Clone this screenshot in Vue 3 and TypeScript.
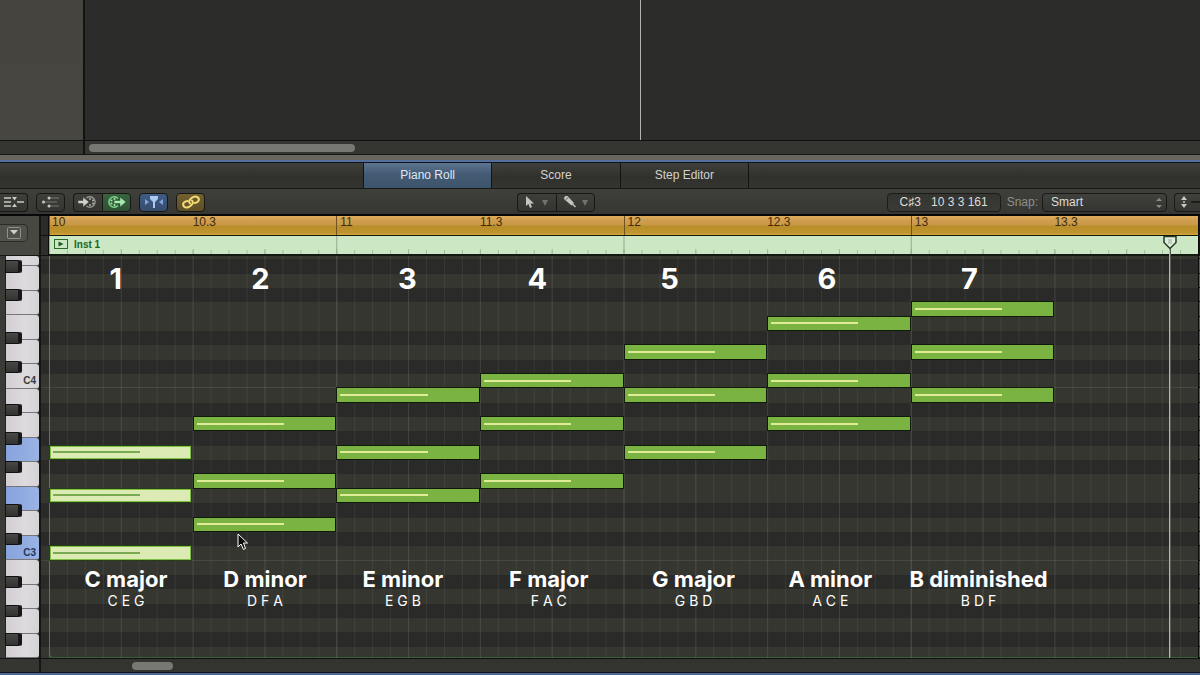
<script setup lang="ts">
import { ref } from 'vue'

interface Note { row: number; half: number; selected?: boolean }
interface Chord { name: string; tones: string; rows: number[]; numberAt: number; labelAt: number }

const chords: Chord[] = [
  { name: 'C major', tones: 'C E G', rows: [22, 18, 15], numberAt: 5.8, labelAt: 6.7 },
  { name: 'D minor', tones: 'D F A', rows: [20, 17, 13], numberAt: 18.4, labelAt: 18.8 },
  { name: 'E minor', tones: 'E G B', rows: [18, 15, 11], numberAt: 31.2, labelAt: 30.8 },
  { name: 'F major', tones: 'F A C', rows: [17, 13, 10], numberAt: 42.5, labelAt: 43.5 },
  { name: 'G major', tones: 'G B D', rows: [15, 11, 8], numberAt: 54, labelAt: 56.1 },
  { name: 'A minor', tones: 'A C E', rows: [13, 10, 6], numberAt: 67.7, labelAt: 68 },
  { name: 'B diminished', tones: 'B D F', rows: [11, 8, 5], numberAt: 80.1, labelAt: 80.9 },
]

const notes: Note[] = chords.flatMap((c, i) =>
  c.rows.map((row) => ({ row, half: i + 1, selected: i === 0 })),
)

// Lanes from A4 down to F2; row 10 is C4 and row 22 is C3.
const lanes = Array.from({ length: 29 }, (_, i) => {
  const pitch = (((10 - (i + 1)) % 12) + 12) % 12
  return { row: i + 1, black: [1, 3, 6, 8, 10].includes(pitch), c: pitch === 0 }
})
const blackLanes = lanes.filter((l) => l.black)

const whiteKeys = Array.from({ length: 17 }, (_, i) => ({
  id: i,
  label: i === 5 ? 'C4' : i === 12 ? 'C3' : '',
  lit: [8, 10, 12].includes(i),
}))

const marks = ['10', '10.3', '11', '11.3', '12', '12.3', '13', '13.3']
const tabs = ['Piano Roll', 'Score', 'Step Editor']
const activeTab = ref('Piano Roll')
const snap = ref('Smart')
</script>

<template>
  <main class="app">
    <section class="arrange">
      <div class="track-head"></div>
      <div class="track-area"><div class="arrange-playhead"></div></div>
      <div class="arrange-scroll-left"></div>
      <div class="arrange-scroll"><div class="thumb wide"></div></div>
    </section>
    <div class="divider"></div>

    <nav class="tabs">
      <div class="tab-set">
        <button v-for="t in tabs" :key="t" type="button" class="tab" :class="{ active: t === activeTab }" @click="activeTab = t">{{ t }}</button>
      </div>
    </nav>

    <div class="toolbar">
      <div class="left-tools">
        <button type="button" class="tool first" aria-label="Collapse mode">
          <svg width="20" height="12" viewBox="0 0 20 12" stroke="#c9c9c4" stroke-width="1.5" fill="none">
            <path d="M0 2h7M0 6h7M0 10h7M13 6h7" /><path d="M8 1h5l-2.500 3.500zM8 11h5l-2.500-3.500z" fill="#c9c9c4" stroke="none" />
          </svg>
        </button>
        <button type="button" class="tool" aria-label="Automation">
          <svg width="18" height="12" viewBox="0 0 18 12" stroke="#777773" fill="none">
            <path d="M7 2h10M3 6h12M7 10h10" /><g fill="#c9c9c4" stroke="none"><circle cx="7" cy="2" r="1.500" /><circle cx="1.500" cy="6" r="1.500" /><circle cx="7" cy="10" r="1.500" /></g>
          </svg>
        </button>
        <div class="pair">
          <button type="button" class="tool" aria-label="MIDI in">
            <svg width="20" height="14" viewBox="0 0 20 14">
              <path d="M8.500 3a5.200 5.200 0 1 1 0 8" fill="none" stroke="#92928d" stroke-width="1.600" />
              <g fill="#a5a5a0"><circle cx="12" cy="4" r="1.100" /><circle cx="15" cy="5.500" r="1.100" /><circle cx="15" cy="8.500" r="1.100" /><circle cx="12" cy="10" r="1.100" /></g>
              <path d="M0 5.500h5V2l6 5-6 5V8.500H0z" fill="#d0d0cb" stroke="#383834" stroke-width=".5" />
            </svg>
          </button>
          <button type="button" class="tool green" aria-label="MIDI out">
            <svg width="20" height="14" viewBox="0 0 20 14">
              <path d="M11 3.500a5.200 5.200 0 1 0 0 7" fill="none" stroke="#80d08c" stroke-width="1.600" />
              <g fill="#9be6a5"><circle cx="7.500" cy="4" r="1.100" /><circle cx="4.500" cy="5.500" r="1.100" /><circle cx="4.500" cy="8.500" r="1.100" /><circle cx="7.500" cy="10" r="1.100" /></g>
              <path d="M7 5.500h6V2l6 5-6 5V8.500H7z" fill="#a5eab0" stroke="#2c5033" stroke-width=".5" />
            </svg>
          </button>
        </div>
        <button type="button" class="tool blue" aria-label="Catch playhead">
          <svg width="20" height="14" viewBox="0 0 20 14">
            <path d="M6 1h8v3l-3 3v6H9V7L6 4z" fill="#a9c8f5" /><path d="M1 4l4 3-4 3zM19 4l-4 3 4 3z" fill="#7fa3da" />
          </svg>
        </button>
        <button type="button" class="tool yellow" aria-label="Link">
          <svg width="18" height="14" viewBox="0 0 18 14" fill="none" stroke="#f3dc76" stroke-width="2" stroke-linecap="round">
            <path d="M8 8.500C6.800 7 7.200 5.200 8.500 4L10 2.800c1.500-1.200 4-1.500 5.500-.600 1.800 1.200 1.800 3.200.300 4.500C14.800 7.800 13.500 8 12.500 8" />
            <path d="M10 5.500c1.200 1.500.800 3.300-.500 4.500L8 11.200c-1.500 1.200-4 1.500-5.500.600-1.800-1.200-1.800-3.200-.300-4.500C3.200 6.200 4.500 6 5.500 6" />
          </svg>
        </button>
      </div>
      <div class="pair">
        <button type="button" class="tool pick" aria-label="Pointer tool">
          <svg width="24" height="14" viewBox="0 0 24 14"><path d="M1 1v10l2.500-2 1.500 4 2-1-1.500-3.500H9z" fill="#c4c4bf" /><path d="M17 5h6l-3 6z" fill="#73736e" /></svg>
        </button>
        <button type="button" class="tool pick" aria-label="Pencil tool">
          <svg width="26" height="14" viewBox="0 0 26 14"><path d="M1 2.500L2.500 1h2l6.500 7-2.500 2.500L1 4z" fill="#c4c4bf" /><path d="M9.500 9l3 3" stroke="#c4c4bf" stroke-width="1.500" /><path d="M3 4.500l2-2" stroke="#454540" /><path d="M19 5h6l-3 6z" fill="#73736e" /></svg>
        </button>
      </div>
      <div class="right-tools">
        <output class="position"><span>C♯3</span><span>10 3 3 161</span></output>
        <label for="snap">Snap:</label>
        <div class="select-wrap">
          <select id="snap" v-model="snap"><option>Smart</option><option>Bar</option><option>Beat</option></select>
          <svg width="6" height="12" viewBox="0 0 6 12"><path d="M0 4l3-3 3 3zM0 8l3 3 3-3z" fill="#8b8b86" /></svg>
        </div>
        <div class="zoom-box">
          <svg width="19" height="12" viewBox="0 0 19 12"><path d="M0 4l3-4 3 4zM0 8l3 4 3-4z" fill="#c9c9c4" /><circle cx="3" cy="6" r="1" fill="#c9c9c4" /><path d="M10 6h9" stroke="#1d1d1b" stroke-width="2" /></svg>
        </div>
      </div>
    </div>

    <section class="editor">
      <div class="corner">
        <button type="button" class="corner-btn" aria-label="Inspector">
          <svg width="14" height="12" viewBox="0 0 14 12"><rect x=".5" y=".5" width="13" height="11" rx="1" fill="none" stroke="#92928d" /><path d="M3 3h8L7 7.500z" fill="#d0d0cb" /></svg>
        </button>
      </div>
      <div class="gutter gutter-top"></div>
      <header class="timeline">
        <div class="ruler">
          <div v-for="(m, i) in marks" :key="m" class="mark" :class="{ bar: i % 2 === 0 }">{{ m }}</div>
        </div>
        <div class="region">
          <svg width="14" height="10" viewBox="0 0 14 10"><rect x=".5" y=".5" width="13" height="9" fill="none" stroke="#2a6a27" /><path d="M4.500 2.500L9.500 5l-5 2.500z" fill="#1f5a1d" /></svg>
          <span>Inst 1</span>
        </div>
      </header>
      <div class="edge edge-top"></div>

      <div class="piano">
        <div class="whites">
          <div v-for="k in whiteKeys" :key="k.id" class="white" :class="{ lit: k.lit }">{{ k.label }}</div>
        </div>
        <div class="blacks rows">
          <div v-for="l in blackLanes" :key="l.row" class="black" :style="{ gridRow: l.row }"></div>
        </div>
      </div>
      <div class="lanes-bg rows">
        <div v-for="l in lanes" :key="l.row" class="lane" :class="{ dark: l.black, c: l.c }"></div>
      </div>
      <div class="roll">
        <div class="grid-lines"></div>
        <div class="notes rows">
          <div v-for="(n, i) in notes" :key="i" class="note" :class="{ selected: n.selected }" :style="{ gridRow: n.row, gridColumn: n.half }"><i></i></div>
        </div>
        <template v-for="(c, i) in chords" :key="c.name">
          <div class="number" :style="{ left: c.numberAt + '%' }">{{ i + 1 }}</div>
          <div class="caption" :style="{ left: c.labelAt + '%' }">
            <strong>{{ c.name }}</strong>
            <span>{{ c.tones }}</span>
          </div>
        </template>
        <div class="playhead">
          <svg width="14" height="14" viewBox="0 0 14 14"><path d="M1 .5h12v6L7 12.500 1 6.500z" fill="#dfeedd" stroke="#263a26" stroke-width="1.500" /><path d="M6 3v5M8 3v5" stroke="#9aa89a" /></svg>
        </div>
        <svg class="cursor" width="12" height="18" viewBox="0 0 12 18"><path d="M1 1v13l3-3 2.500 5.500 2-1L6.500 10H10.500z" fill="#0c0c0c" stroke="#fff" /></svg>
      </div>
      <div class="edge rows">
        <div v-for="l in lanes" :key="l.row" class="sliver" :class="{ red: l.c }"></div>
      </div>

      <div class="foot-left"></div>
      <div class="foot"><div class="thumb small"></div></div>
    </section>
    <div class="focus-line"></div>
  </main>
</template>

<style>
html, body { margin: 0; background: #2c2c2a; }
</style>

<style scoped>
* { box-sizing: border-box; }
.app { display: flex; flex-direction: column; min-height: 100vh; overflow: hidden; background: #373733; font-family: "Liberation Sans", Arial, sans-serif; font-size: 12px; color: #d2d2ce; }
button, select { font: inherit; color: inherit; margin: 0; padding: 0; }
.arrange { display: grid; grid-template-columns: 85px 1fr; grid-template-rows: 141px 14px; }
.track-head { background: linear-gradient(#45443f, #474640); border-right: 2px solid #131312; border-bottom: 1px solid #131312; }
.track-area { background: #2c2c2a; border-bottom: 1px solid #111; display: flex; }
.arrange-playhead { width: 1px; margin-left: 49.8%; background: #b2b2ae; }
.arrange-scroll, .arrange-scroll-left { background: #353531; border-bottom: 1px solid #161615; }
.arrange-scroll-left { border-right: 2px solid #131312; }
.arrange-scroll { padding: 3px 4px; }
.thumb { background: #777773; border-radius: 4px; height: 8px; }
.wide { width: 24%; }
.divider { height: 8px; background: #68665d; border-bottom: 1px solid #10151c; box-shadow: inset 0 -2px #546f9e; }

.tabs { display: grid; grid-template-columns: 363fr 386px 451fr; height: 26px; background: linear-gradient(#3f3f3c, #30302c 55%, #343430); border-bottom: 1px solid #171715; }
.tab-set { grid-column: 2; display: flex; border-left: 1px solid #131312; }
.tab { flex: 1; border: 0; border-right: 1px solid #131312; background: none; color: #d2d2ce; padding-bottom: 2px; }
.tab.active { background: linear-gradient(#5c7590, #445b74 45%, #3d546d); color: #dfe8f2; }

.toolbar { display: grid; grid-template-columns: minmax(0, 517fr) 78px minmax(0, 605fr); align-items: center; height: 27px; padding-top: 1px; border-bottom: 2px solid #080808; background: linear-gradient(#3f403a, #363732); }
.left-tools, .right-tools, .pair { display: flex; align-items: center; }
.left-tools { gap: 8px; }
.right-tools { justify-content: flex-end; }
.tool { display: flex; align-items: center; justify-content: center; width: 29px; height: 19px; border: 1px solid #171716; border-radius: 4px; background: linear-gradient(#3e3e3a, #343430); }
.first { width: 28px; border-left: 0; border-radius: 0 4px 4px 0; }
.pair .tool:first-child { border-radius: 4px 0 0 4px; border-right: 0; }
.pair .tool:last-child { border-radius: 0 4px 4px 0; }
.pair .pick, .pair .pick:last-child { width: 39px; }
.tool.green { background: linear-gradient(#39633f, #2f5034); }
.tool.blue { background: linear-gradient(#405b83, #364c6c); }
.tool.yellow { background: linear-gradient(#72602e, #5e4f26); }
.position { display: flex; gap: 10px; align-items: center; justify-content: center; width: 114px; height: 19px; border: 1px solid #1b1b19; border-radius: 4px; background: linear-gradient(#343431, #3a3a36); color: #deded9; white-space: nowrap; }
label { margin: 0 4px 0 6px; color: #8f8f89; }
.select-wrap { position: relative; display: flex; width: 125px; height: 19px; }
.select-wrap select { width: 100%; appearance: none; border: 1px solid #191918; border-radius: 4px; background: linear-gradient(#40403c, #343430); color: #deded9; padding: 0 8px; }
.select-wrap svg { position: absolute; right: 5px; top: 4px; pointer-events: none; }
.zoom-box { display: flex; align-items: center; width: 26px; height: 19px; margin-left: 7px; padding-left: 6px; border: 1px solid #191918; border-right: 0; border-radius: 4px 0 0 4px; background: linear-gradient(#40403c, #343430); }

.editor { flex: 1; display: grid; grid-template-columns: 41px 8px minmax(0, 1fr) 2px; grid-template-rows: 40px minmax(402px, 1fr) 14px; }
.rows { display: grid; grid-template-rows: 24fr repeat(27, 100fr) 80fr; }
.corner { display: flex; align-items: center; padding-bottom: 6px; background: #484843; border-right: 2px solid #161615; border-bottom: 1px solid #161615; }
.corner-btn { display: flex; align-items: center; justify-content: center; width: 28px; height: 18px; border: 1px solid #2b2b28; border-left: 0; border-radius: 0 5px 5px 0; background: #51514c; }
.gutter { background: #2a2a28; border-right: 1px solid #0d0d0d; }
.gutter-top { background: linear-gradient(#2b2b29 19px, #121212 19px, #121212 20px, #2f2f2d 20px); border-bottom: 1px solid #111; }
.timeline { border-bottom: 2px solid #121a12; display: grid; grid-template-rows: 20px 18px; }
.ruler { display: grid; grid-template-columns: repeat(8, 1fr); background: linear-gradient(#dcaa58 1px, #cf9e52 4px, #c99846 9px, #b98d29 10px, #bf952f 17px, #d6a93a); border-bottom: 1px solid #15180e; color: #402c0a; line-height: 13px; }
.mark.bar { padding-left: 3px; border-left: 1px solid #6e5220; }
.mark.bar:first-child { padding-left: 2px; }
.region { display: flex; align-items: center; gap: 6px; padding: 0 5px 2px; color: #1f641d; font-size: 10px; font-weight: bold; background: linear-gradient(90deg, #93ad8f 1px, transparent 1px) 0 0 / 25% 100%, linear-gradient(90deg, #9fbb9a 1px, transparent 1px) 0 100% / 6.25% 5px repeat-x, linear-gradient(90deg, #a3bf9e 1px, transparent 1px) 0 100% / 1.5625% 4px repeat-x, #cbe7c3; }
.edge { background: #17301a; border-left: 1px solid #0b0b0b; }
.edge-top { background: #101510; }
.sliver { background: #387744; border-bottom: 1px solid #0d180f; }
.sliver.red { background: #8f2625; }

.piano { display: grid; grid-template: minmax(0, 1fr) / 1fr; border-left: 5px solid #3a3a36; border-right: 2px solid #161615; }
.whites { grid-area: 1 / 1; display: grid; grid-template-rows: 42fr repeat(16, 100fr); }
.white { min-height: 0; display: flex; align-items: center; justify-content: flex-end; padding: 11px 3px 0 0; overflow: hidden; font-size: 10px; line-height: 12px; font-weight: bold; color: #3c3a3a; border-left: 1px solid #222; border-bottom: 1px solid #77757a; border-radius: 0 3px 3px 0; background: linear-gradient(90deg, #d2ced3, #dedbde 60%, #d5d2d6); }
.white:first-child { padding: 0; }
.white.lit { background: linear-gradient(90deg, #86a3dc, #9ab3e4); color: #26385a; }
.blacks { grid-area: 1 / 1; }
.black { width: 17px; margin: 1px 0; border: 1px solid #111; border-right: 4px solid #171717; border-radius: 0 2px 2px 0; background: linear-gradient(#484846, #323231); }

.lanes-bg { grid-column: 2 / 4; grid-row: 2; }
.lane { background: #363630; }
.lane.dark { background: #2a2a28; }
.lane.c { border-bottom: 1px solid #474742; }
.roll { grid-column: 3; grid-row: 2; position: relative; display: grid; grid-template: minmax(0, 1fr) / minmax(0, 1fr); box-shadow: inset 1px -1px #356039; border-radius: 0 0 0 4px; }
.editor > .edge { grid-column: 4; }
.grid-lines { grid-area: 1 / 1; background: linear-gradient(90deg, rgba(255, 255, 255, .06) 1px, transparent 1px) 0 0 / 25% 100%, linear-gradient(90deg, rgba(255, 255, 255, .05) 1px, transparent 1px) 0 0 / 6.25% 100%, linear-gradient(90deg, rgba(255, 255, 255, .06) 1px, transparent 1px) 0 0 / 1.5625% 100%; }
.notes { grid-area: 1 / 1; grid-template-columns: repeat(8, 1fr); }
.note { display: flex; align-items: center; margin-top: -1px; padding-left: 3px; border: 1px solid #101a08; background: #7ab342; }
.note i { width: 63%; height: 2px; background: #dfeb97; }
.note.selected { background: #dcebb4; border-color: #263f15; box-shadow: inset 0 0 0 1px #7fbf45; margin-right: 1px; }
.note.selected i { background: #79a950; }
.number, .caption { position: absolute; transform: translate(-50%, -50%); color: #fff; font-family: Inter, "Liberation Sans", sans-serif; white-space: nowrap; }
.number { top: 5.8%; font-size: 29px; line-height: 32px; font-weight: 700; }
.caption { top: 82.8%; display: flex; flex-direction: column; align-items: center; }
.caption strong { font-size: 22px; line-height: 24px; font-weight: 700; }
.caption span { font-size: 14px; line-height: 20px; }
.playhead { position: absolute; top: -20px; bottom: 0; left: 97.5%; width: 2px; background: linear-gradient(90deg, #b4b4b0 1px, #5a5a57 1px); }
.playhead svg { position: absolute; left: -6px; top: 0; }
.cursor { position: absolute; left: 16.4%; top: 68.8%; }
.foot-left { border-top: 1px solid #151514; border-right: 2px solid #161615; background: #353531; }
.foot { grid-column: 2 / 5; border-top: 1px solid #111; background: #333330; padding: 3px 0 0 91px; }
.small { width: 41px; }
.focus-line { height: 3px; background: #4c6897; border-top: 1px solid #10151c; }
</style>
